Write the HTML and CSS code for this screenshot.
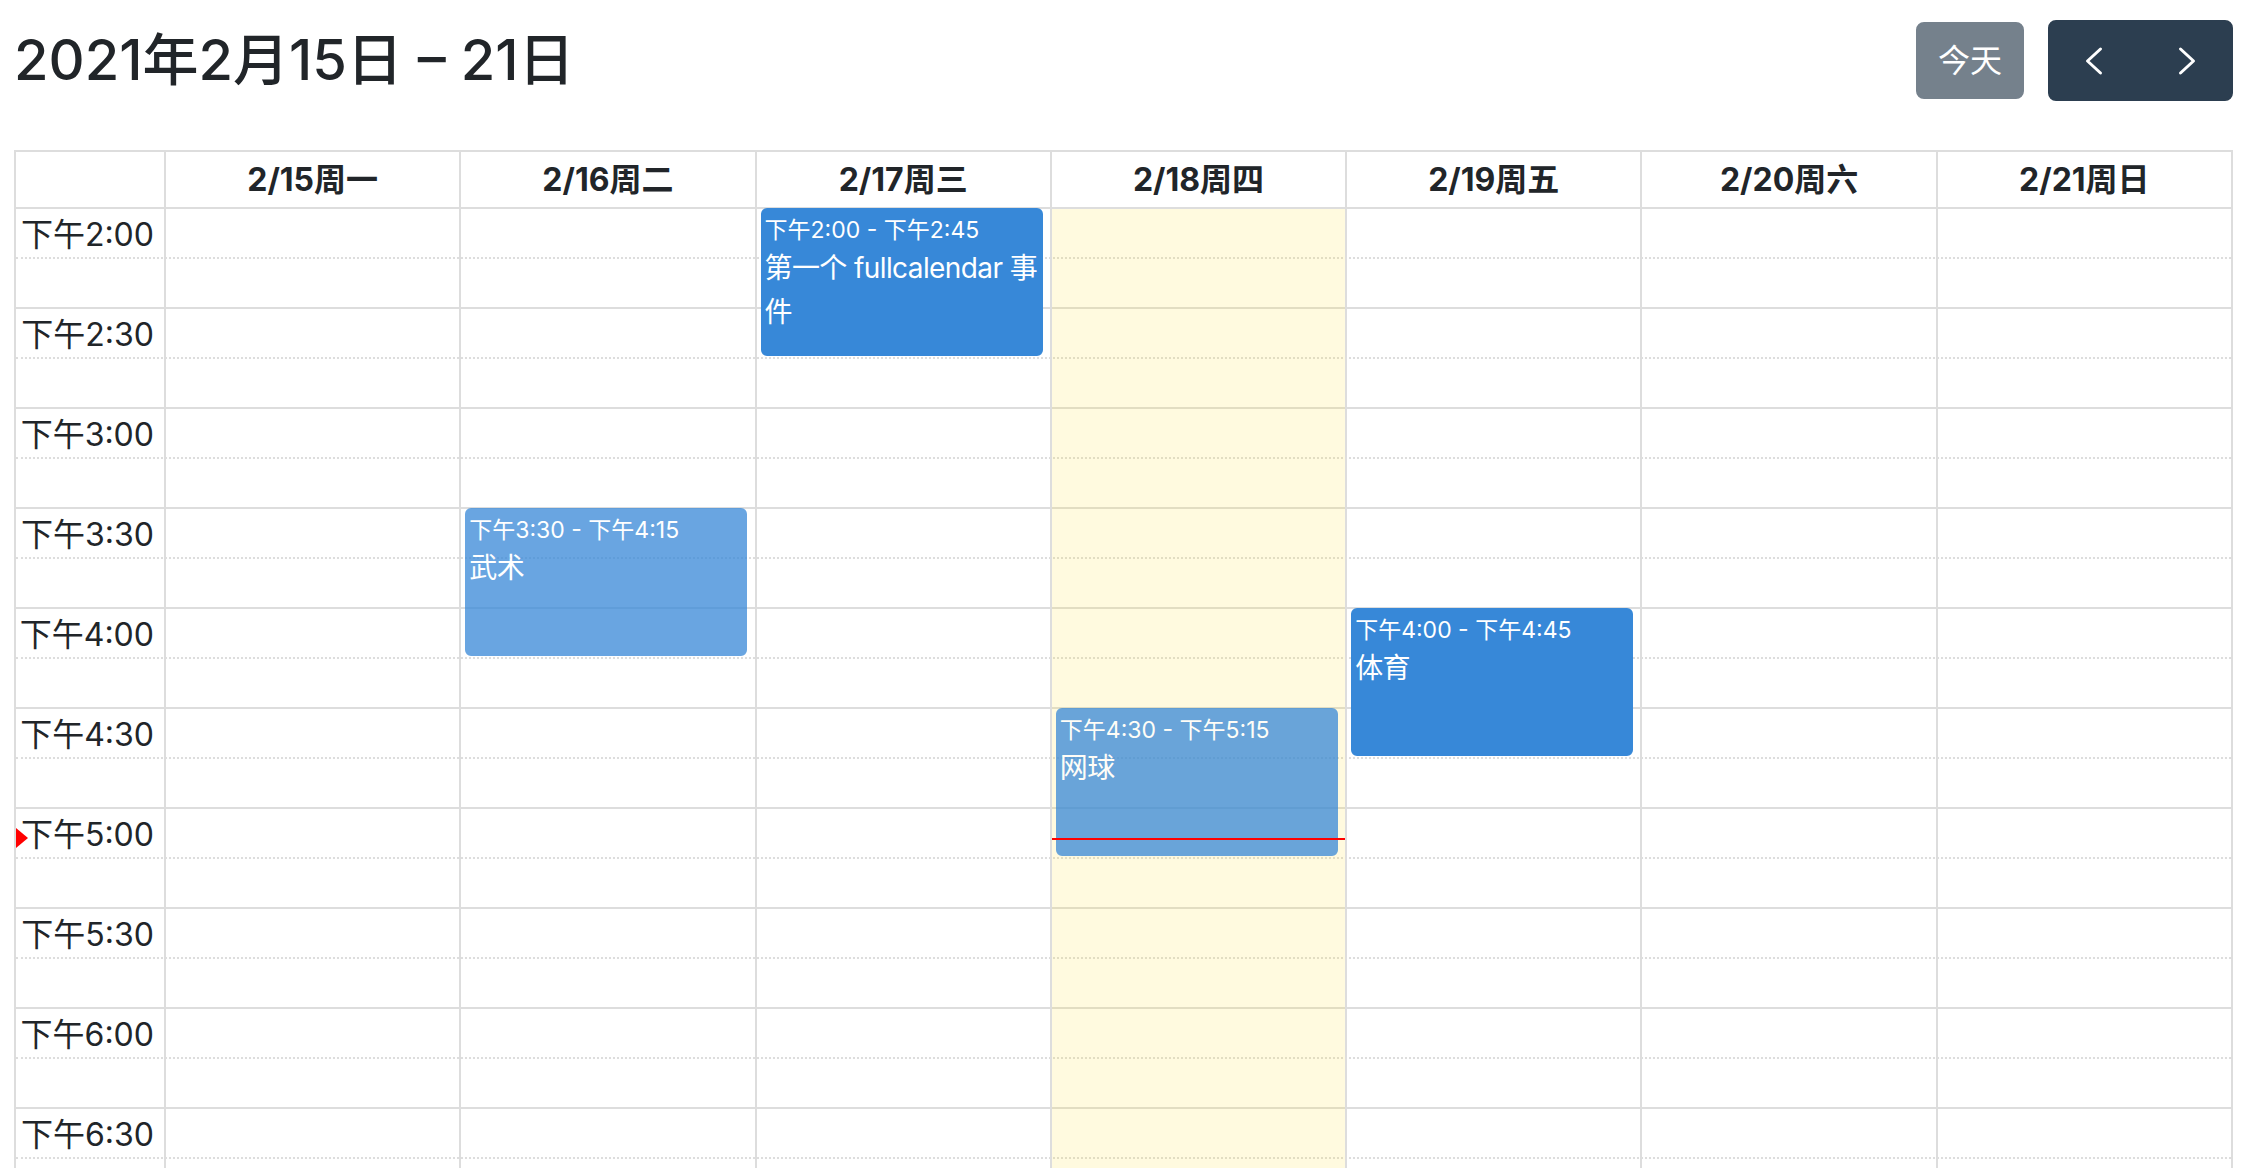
FILE: index.html
```html
<!DOCTYPE html>
<html lang="zh-CN">

<head>
    <meta charset="UTF-8">
    <meta name="viewport" content="width=device-width, initial-scale=1.0">
    <title>日历</title>
    <link rel="stylesheet" href="styles.css">
</head>

<body>
    <div class="calendar">
        <!-- 顶部工具栏 -->
        <div class="toolbar">
            <h2 class="toolbar-title">2021年2月15日 – 21日</h2>
            <div class="toolbar-actions">
                <button class="btn btn-today" disabled>今天</button>
                <div class="btn-group">
                    <button class="btn btn-icon" aria-label="上一周">
                        <svg viewBox="0 0 48 52" width="48" height="52">
                            <path d="M30.5 14 L17.5 26 L30.5 38" />
                        </svg>
                    </button>
                    <button class="btn btn-icon" aria-label="下一周">
                        <svg viewBox="0 0 48 52" width="48" height="52">
                            <path d="M17.5 14 L30.5 26 L17.5 38" />
                        </svg>
                    </button>
                </div>
            </div>
        </div>

        <!-- 周视图 -->
        <div class="grid">
            <div class="grid-head">
                <div class="head-cell head-axis"></div>
                <div class="head-cell">2/15周一</div>
                <div class="head-cell">2/16周二</div>
                <div class="head-cell">2/17周三</div>
                <div class="head-cell">2/18周四</div>
                <div class="head-cell">2/19周五</div>
                <div class="head-cell">2/20周六</div>
                <div class="head-cell">2/21周日</div>
            </div>

            <div class="grid-body">
                <div class="slats">
                    <div class="slat slat-half"><span class="slat-label">下午2:00</span></div>
                    <div class="slat"></div>
                    <div class="slat slat-half"><span class="slat-label">下午2:30</span></div>
                    <div class="slat"></div>
                    <div class="slat slat-half"><span class="slat-label">下午3:00</span></div>
                    <div class="slat"></div>
                    <div class="slat slat-half"><span class="slat-label">下午3:30</span></div>
                    <div class="slat"></div>
                    <div class="slat slat-half"><span class="slat-label">下午4:00</span></div>
                    <div class="slat"></div>
                    <div class="slat slat-half"><span class="slat-label">下午4:30</span></div>
                    <div class="slat"></div>
                    <div class="slat slat-half"><span class="slat-label">下午5:00</span></div>
                    <div class="slat"></div>
                    <div class="slat slat-half"><span class="slat-label">下午5:30</span></div>
                    <div class="slat"></div>
                    <div class="slat slat-half"><span class="slat-label">下午6:00</span></div>
                    <div class="slat"></div>
                    <div class="slat slat-half"><span class="slat-label">下午6:30</span></div>
                    <div class="slat"></div>
                </div>

                <div class="axis-col">
                    <div class="now-arrow"></div>
                </div>

                <div class="day-col day-mon"></div>

                <div class="day-col day-tue">
                    <div class="event event-faded" style="top: 299px; height: 148px;">
                        <div class="event-time">下午3:30 - 下午4:15</div>
                        <div class="event-title">武术</div>
                    </div>
                </div>

                <div class="day-col day-wed">
                    <div class="event" style="top: -1px; height: 148px;">
                        <div class="event-time">下午2:00 - 下午2:45</div>
                        <div class="event-title">第一个 fullcalendar 事件</div>
                    </div>
                </div>

                <!-- 今天 -->
                <div class="day-col day-thu day-today">
                    <div class="event event-faded" style="top: 499px; height: 148px;">
                        <div class="event-time">下午4:30 - 下午5:15</div>
                        <div class="event-title">网球</div>
                    </div>
                    <div class="now-line"></div>
                </div>

                <div class="day-col day-fri">
                    <div class="event" style="top: 399px; height: 148px;">
                        <div class="event-time">下午4:00 - 下午4:45</div>
                        <div class="event-title">体育</div>
                    </div>
                </div>

                <div class="day-col day-sat"></div>
                <div class="day-col day-sun"></div>
            </div>
        </div>
    </div>
</body>

</html>
```

FILE: styles.css
```css
html,
body {
    margin: 0;
    padding: 0;
    overflow: hidden;
    background: #fff;
}

body {
    font-family: Inter, "Noto Sans CJK SC", sans-serif;
    font-size: 32px;
    color: #212529;
}

.calendar {
    width: 2219px;
    margin-left: 14px;
    padding-top: 20px;
}

/* 工具栏 */
.toolbar {
    display: flex;
    justify-content: space-between;
    align-items: center;
    margin-bottom: 49px;
}

.toolbar-title {
    margin: 0;
    font-size: 56px;
    font-weight: 500;
    line-height: 1.2;
}

.toolbar-actions {
    display: flex;
    align-items: center;
    gap: 24px;
}

.btn {
    font-family: inherit;
    font-size: 32px;
    color: #fff;
    background-color: #2c3e50;
    border: 2px solid #2c3e50;
    border-radius: 8px;
    margin: 0;
}

.btn-today {
    line-height: 48px;
    padding: 12.5px 20px;
    opacity: 0.65;
}

.btn-group {
    display: flex;
}

.btn-icon {
    display: flex;
    padding: 12.5px 20.25px;
}

.btn-group .btn-icon:first-child {
    border-top-right-radius: 0;
    border-bottom-right-radius: 0;
}

.btn-group .btn-icon:last-child {
    border-top-left-radius: 0;
    border-bottom-left-radius: 0;
}

.btn-icon svg {
    display: block;
    fill: none;
    stroke: #fff;
    stroke-width: 3;
    stroke-linecap: round;
    stroke-linejoin: round;
}

/* 表格 */
.grid {
    border: 2px solid #ddd;
    border-bottom: none;
}

.grid-head,
.grid-body {
    display: grid;
    grid-template-columns: 148px repeat(7, 1fr);
}

.grid-head {
    border-bottom: 2px solid #ddd;
}

.head-cell {
    height: 55px;
    box-sizing: border-box;
    padding-bottom: 5px;
    display: flex;
    align-items: center;
    justify-content: center;
    font-weight: 700;
    border-left: 2px solid #ddd;
}

.head-cell.head-axis {
    border-left: none;
}

/* 时间格与日期列叠在同一行 */
.grid-body > * {
    grid-row: 1;
}

.slats {
    grid-column: 1 / -1;
}

.slat {
    height: 50px;
    box-sizing: border-box;
    border-bottom: 2px solid #ddd;
}

.slat-half {
    border-bottom-style: dotted;
}

.slat-label {
    display: block;
    width: 148px;
    box-sizing: border-box;
    padding-right: 10px;
    text-align: right;
    line-height: 52px;
    white-space: nowrap;
}

.axis-col {
    grid-column: 1;
    position: relative;
}

.day-col {
    position: relative;
    border-left: 2px solid #ddd;
}

.day-mon { grid-column: 2; }
.day-tue { grid-column: 3; }
.day-wed { grid-column: 4; }
.day-thu { grid-column: 5; }
.day-fri { grid-column: 6; }
.day-sat { grid-column: 7; }
.day-sun { grid-column: 8; }

.day-today {
    background-color: rgba(255, 220, 40, 0.15);
}

/* 事件 */
.event {
    position: absolute;
    left: 4px;
    right: 2.5%;
    box-sizing: border-box;
    padding: 4px 2px 0;
    background-color: #3788d8;
    border: 2px solid #3788d8;
    border-radius: 6px;
    color: #fff;
    overflow: hidden;
}

.event-faded {
    opacity: 0.75;
}

.event-time {
    font-size: 23px;
    line-height: 32px;
    white-space: nowrap;
}

.event-title {
    font-size: 28px;
    line-height: 44px;
    letter-spacing: -0.6px;
}

/* 当前时间指示 */
.now-line {
    position: absolute;
    left: 0;
    right: 0;
    top: 629px;
    border-top: 2px solid red;
    z-index: 3;
}

.now-arrow {
    position: absolute;
    left: 0;
    top: 619px;
    width: 0;
    height: 0;
    border-style: solid;
    border-width: 10px 0 10px 12px;
    border-color: transparent transparent transparent red;
}
```
